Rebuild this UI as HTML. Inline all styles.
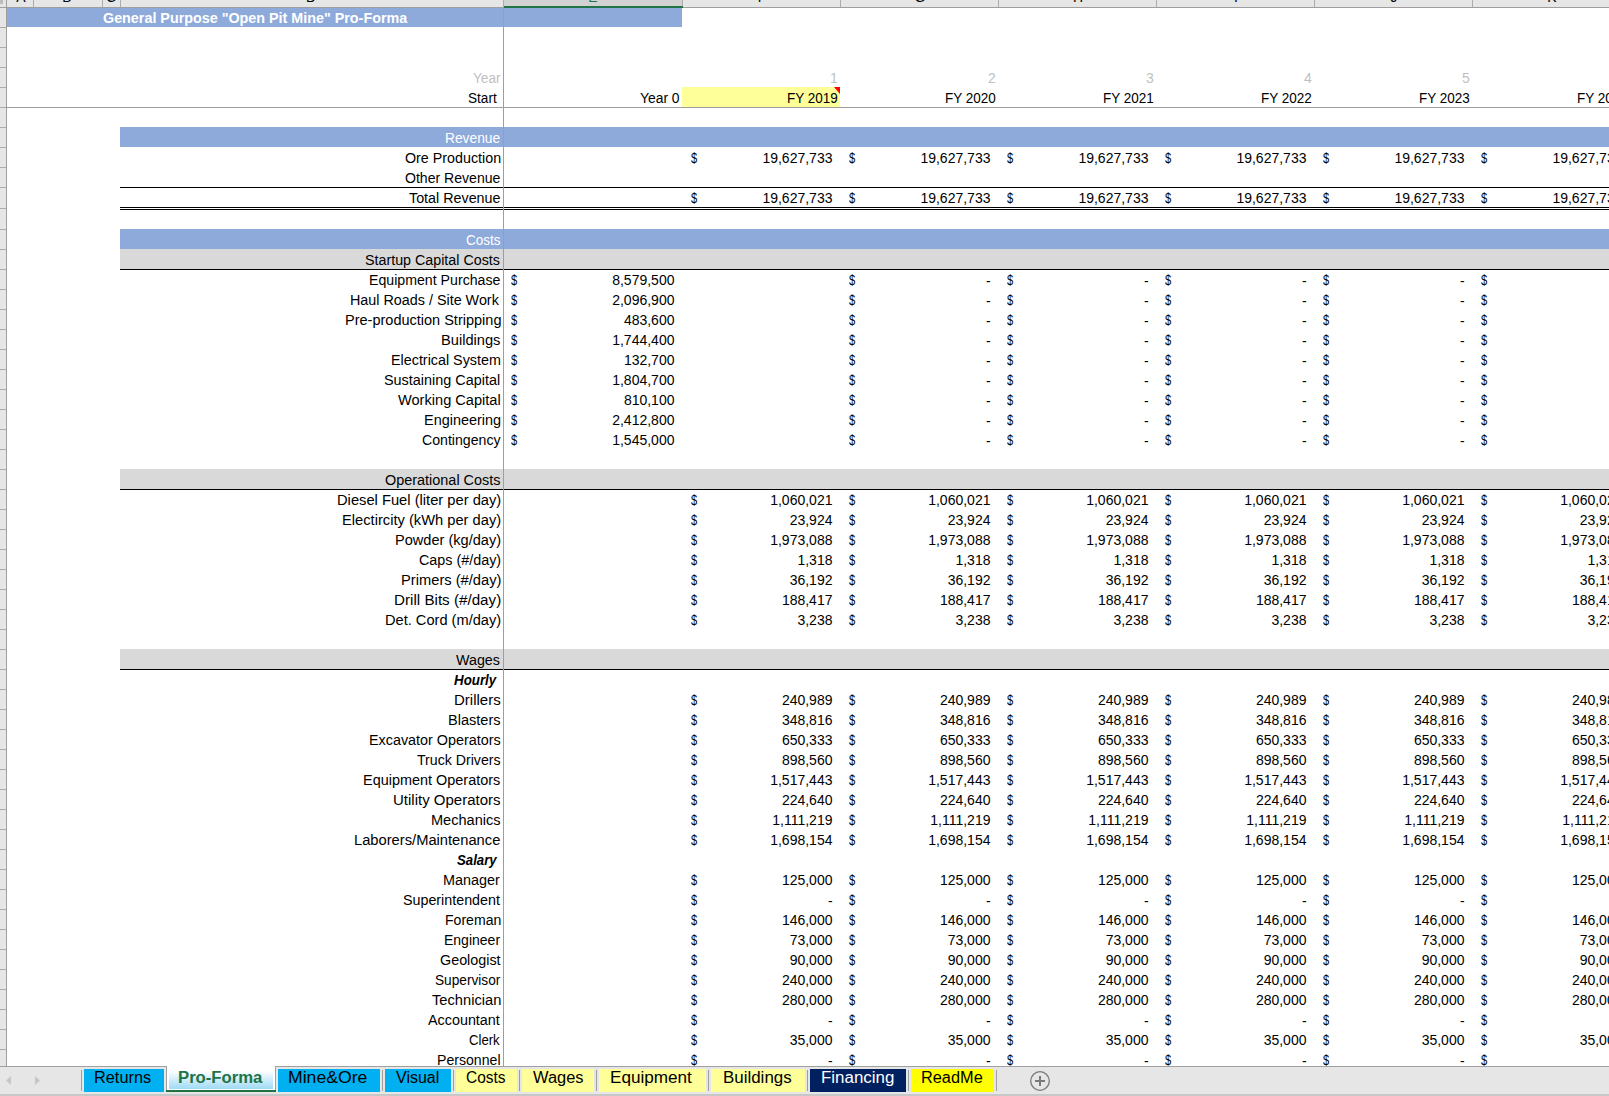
<!DOCTYPE html>
<html><head><meta charset="utf-8"><style>
html,body{margin:0;padding:0;}
body{width:1609px;height:1096px;overflow:hidden;position:relative;background:#fff;font-family:"Liberation Sans",sans-serif;}
.r{position:absolute;}
.t{position:absolute;line-height:0;height:20px;white-space:nowrap;transform-origin:0 0;}
.t::before{content:"";display:inline-block;height:20px;vertical-align:baseline;}
.hl{position:absolute;top:-11px;width:40px;text-align:center;font-size:14px;line-height:16px;height:16px;overflow:hidden;}
</style></head><body>
<div class="r" style="left:7px;top:8px;width:675px;height:19px;background:#8eaadb;"></div>
<div class="r" style="left:120px;top:127px;width:1489px;height:20px;background:#8eaadb;"></div>
<div class="r" style="left:120px;top:229px;width:1489px;height:20px;background:#8eaadb;"></div>
<div class="r" style="left:120px;top:249px;width:1489px;height:20px;background:#d9d9d9;"></div>
<div class="r" style="left:120px;top:269px;width:1489px;height:1px;background:#000;"></div>
<div class="r" style="left:120px;top:469px;width:1489px;height:20px;background:#d9d9d9;"></div>
<div class="r" style="left:120px;top:489px;width:1489px;height:1px;background:#000;"></div>
<div class="r" style="left:120px;top:649px;width:1489px;height:20px;background:#d9d9d9;"></div>
<div class="r" style="left:120px;top:669px;width:1489px;height:1px;background:#000;"></div>
<div class="r" style="left:120px;top:187px;width:1489px;height:1px;background:#000;"></div>
<div class="r" style="left:120px;top:207px;width:1489px;height:1px;background:#000;"></div>
<div class="r" style="left:120px;top:209px;width:1489px;height:1px;background:#000;"></div>
<div class="r" style="left:682px;top:87px;width:158px;height:20px;background:#ffff99;"></div>
<div class="r" style="left:834px;top:87px;width:0;height:0;border-top:7px solid #ff0000;border-left:6px solid transparent;"></div>
<div class="t" style="left:102.70px;top:3.00px;font-size:14px;color:#fff;font-weight:bold;transform:scaleX(1.0234);">General Purpose &quot;Open Pit Mine&quot; Pro-Forma</div>
<div class="t" style="left:472.50px;top:63.00px;font-size:14px;color:#bfbfbf;transform:scaleX(0.9712);">Year</div>
<div class="t" style="left:467.50px;top:83.00px;font-size:14px;color:#000;transform:scaleX(0.9705);">Start</div>
<div class="t" style="left:639.50px;top:83.00px;font-size:14px;color:#000;transform:scaleX(0.9906);">Year 0</div>
<div class="t" style="left:830.00px;top:63.00px;font-size:14px;color:#bfbfbf;">1</div>
<div class="t" style="left:786.74px;top:83.00px;font-size:14px;color:#000;transform:scaleX(0.9648);">FY 2019</div>
<div class="t" style="left:988.00px;top:63.00px;font-size:14px;color:#bfbfbf;">2</div>
<div class="t" style="left:944.74px;top:83.00px;font-size:14px;color:#000;transform:scaleX(0.9648);">FY 2020</div>
<div class="t" style="left:1146.00px;top:63.00px;font-size:14px;color:#bfbfbf;">3</div>
<div class="t" style="left:1102.74px;top:83.00px;font-size:14px;color:#000;transform:scaleX(0.9648);">FY 2021</div>
<div class="t" style="left:1304.00px;top:63.00px;font-size:14px;color:#bfbfbf;">4</div>
<div class="t" style="left:1260.74px;top:83.00px;font-size:14px;color:#000;transform:scaleX(0.9648);">FY 2022</div>
<div class="t" style="left:1462.00px;top:63.00px;font-size:14px;color:#bfbfbf;">5</div>
<div class="t" style="left:1418.74px;top:83.00px;font-size:14px;color:#000;transform:scaleX(0.9648);">FY 2023</div>
<div class="t" style="left:1620.00px;top:63.00px;font-size:14px;color:#bfbfbf;">6</div>
<div class="t" style="left:1576.74px;top:83.00px;font-size:14px;color:#000;transform:scaleX(0.9648);">FY 2024</div>
<div class="t" style="left:444.92px;top:123.00px;font-size:14px;color:#fff;transform:scaleX(0.9845);">Revenue</div>
<div class="t" style="left:405.00px;top:143.00px;font-size:14px;color:#000;transform:scaleX(1.0206);">Ore Production</div>
<div class="t" style="left:404.70px;top:163.00px;font-size:14px;color:#000;transform:scaleX(1.0046);">Other Revenue</div>
<div class="t" style="left:408.60px;top:183.00px;font-size:14px;color:#000;transform:scaleX(1.0221);">Total Revenue</div>
<div class="t" style="left:465.80px;top:225.00px;font-size:14px;color:#fff;transform:scaleX(0.9641);">Costs</div>
<div class="t" style="left:365.40px;top:245.00px;font-size:14px;color:#000;transform:scaleX(1.0198);">Startup Capital Costs</div>
<div class="t" style="left:368.69px;top:265.00px;font-size:14px;color:#000;transform:scaleX(1.0110);">Equipment Purchase</div>
<div class="t" style="left:350.48px;top:285.00px;font-size:14px;color:#000;transform:scaleX(1.0245);">Haul Roads / Site Work</div>
<div class="t" style="left:344.66px;top:305.00px;font-size:14px;color:#000;transform:scaleX(1.0363);">Pre-production Stripping</div>
<div class="t" style="left:440.85px;top:325.00px;font-size:14px;color:#000;transform:scaleX(1.0463);">Buildings</div>
<div class="t" style="left:391.08px;top:345.00px;font-size:14px;color:#000;transform:scaleX(1.0237);">Electrical System</div>
<div class="t" style="left:384.30px;top:365.00px;font-size:14px;color:#000;transform:scaleX(1.0289);">Sustaining Capital</div>
<div class="t" style="left:397.70px;top:385.00px;font-size:14px;color:#000;transform:scaleX(1.0422);">Working Capital</div>
<div class="t" style="left:424.07px;top:405.00px;font-size:14px;color:#000;transform:scaleX(1.0310);">Engineering</div>
<div class="t" style="left:421.70px;top:425.00px;font-size:14px;color:#000;transform:scaleX(1.0099);">Contingency</div>
<div class="t" style="left:384.80px;top:465.00px;font-size:14px;color:#000;transform:scaleX(1.0307);">Operational Costs</div>
<div class="t" style="left:336.75px;top:485.00px;font-size:14px;color:#000;transform:scaleX(1.0503);">Diesel Fuel (liter per day)</div>
<div class="t" style="left:341.85px;top:505.00px;font-size:14px;color:#000;transform:scaleX(1.0491);">Electircity (kWh per day)</div>
<div class="t" style="left:394.96px;top:525.00px;font-size:14px;color:#000;transform:scaleX(1.0402);">Powder (kg/day)</div>
<div class="t" style="left:418.90px;top:545.00px;font-size:14px;color:#000;transform:scaleX(1.0241);">Caps (#/day)</div>
<div class="t" style="left:400.55px;top:565.00px;font-size:14px;color:#000;transform:scaleX(1.0498);">Primers (#/day)</div>
<div class="t" style="left:393.81px;top:585.00px;font-size:14px;color:#000;transform:scaleX(1.0851);">Drill Bits (#/day)</div>
<div class="t" style="left:384.86px;top:605.00px;font-size:14px;color:#000;transform:scaleX(1.0439);">Det. Cord (m/day)</div>
<div class="t" style="left:456.40px;top:645.00px;font-size:14px;color:#000;transform:scaleX(1.0197);">Wages</div>
<div class="t" style="left:453.63px;top:685.00px;font-size:14px;color:#000;transform:scaleX(1.0716);">Drillers</div>
<div class="t" style="left:447.76px;top:705.00px;font-size:14px;color:#000;transform:scaleX(1.0389);">Blasters</div>
<div class="t" style="left:368.67px;top:725.00px;font-size:14px;color:#000;transform:scaleX(1.0252);">Excavator Operators</div>
<div class="t" style="left:416.70px;top:745.00px;font-size:14px;color:#000;transform:scaleX(1.0109);">Truck Drivers</div>
<div class="t" style="left:363.07px;top:765.00px;font-size:14px;color:#000;transform:scaleX(1.0313);">Equipment Operators</div>
<div class="t" style="left:392.73px;top:785.00px;font-size:14px;color:#000;transform:scaleX(1.0719);">Utility Operators</div>
<div class="t" style="left:430.76px;top:805.00px;font-size:14px;color:#000;transform:scaleX(1.0392);">Mechanics</div>
<div class="t" style="left:353.75px;top:825.00px;font-size:14px;color:#000;transform:scaleX(1.0504);">Laborers/Maintenance</div>
<div class="t" style="left:443.07px;top:865.00px;font-size:14px;color:#000;transform:scaleX(1.0294);">Manager</div>
<div class="t" style="left:403.30px;top:885.00px;font-size:14px;color:#000;transform:scaleX(1.0202);">Superintendent</div>
<div class="t" style="left:444.80px;top:905.00px;font-size:14px;color:#000;transform:scaleX(1.0049);">Foreman</div>
<div class="t" style="left:444.00px;top:925.00px;font-size:14px;color:#000;">Engineer</div>
<div class="t" style="left:439.60px;top:945.00px;font-size:14px;color:#000;transform:scaleX(1.0244);">Geologist</div>
<div class="t" style="left:434.60px;top:965.00px;font-size:14px;color:#000;transform:scaleX(0.9769);">Supervisor</div>
<div class="t" style="left:431.80px;top:985.00px;font-size:14px;color:#000;transform:scaleX(1.0480);">Technician</div>
<div class="t" style="left:428.40px;top:1005.00px;font-size:14px;color:#000;transform:scaleX(1.0248);">Accountant</div>
<div class="t" style="left:468.70px;top:1025.00px;font-size:14px;color:#000;transform:scaleX(0.9386);">Clerk</div>
<div class="t" style="left:436.89px;top:1045.00px;font-size:14px;color:#000;transform:scaleX(1.0076);">Personnel</div>
<div class="t" style="left:454.30px;top:665.00px;font-size:14px;color:#000;font-weight:bold;font-style:italic;transform:scaleX(0.9528);">Hourly</div>
<div class="t" style="left:457.00px;top:845.00px;font-size:14px;color:#000;font-weight:bold;font-style:italic;transform:scaleX(0.9434);">Salary</div>
<div class="t" style="left:690.80px;top:143.00px;font-size:14px;color:#000;transform:scale(0.8000,1.08);transform-origin:0 17px;">$</div>
<div class="t" style="left:762.42px;top:143.00px;font-size:14px;color:#000;">19,627,733</div>
<div class="t" style="left:690.80px;top:183.00px;font-size:14px;color:#000;transform:scale(0.8000,1.08);transform-origin:0 17px;">$</div>
<div class="t" style="left:762.42px;top:183.00px;font-size:14px;color:#000;">19,627,733</div>
<div class="t" style="left:848.80px;top:143.00px;font-size:14px;color:#000;transform:scale(0.8000,1.08);transform-origin:0 17px;">$</div>
<div class="t" style="left:920.42px;top:143.00px;font-size:14px;color:#000;">19,627,733</div>
<div class="t" style="left:848.80px;top:183.00px;font-size:14px;color:#000;transform:scale(0.8000,1.08);transform-origin:0 17px;">$</div>
<div class="t" style="left:920.42px;top:183.00px;font-size:14px;color:#000;">19,627,733</div>
<div class="t" style="left:1006.80px;top:143.00px;font-size:14px;color:#000;transform:scale(0.8000,1.08);transform-origin:0 17px;">$</div>
<div class="t" style="left:1078.42px;top:143.00px;font-size:14px;color:#000;">19,627,733</div>
<div class="t" style="left:1006.80px;top:183.00px;font-size:14px;color:#000;transform:scale(0.8000,1.08);transform-origin:0 17px;">$</div>
<div class="t" style="left:1078.42px;top:183.00px;font-size:14px;color:#000;">19,627,733</div>
<div class="t" style="left:1164.80px;top:143.00px;font-size:14px;color:#000;transform:scale(0.8000,1.08);transform-origin:0 17px;">$</div>
<div class="t" style="left:1236.42px;top:143.00px;font-size:14px;color:#000;">19,627,733</div>
<div class="t" style="left:1164.80px;top:183.00px;font-size:14px;color:#000;transform:scale(0.8000,1.08);transform-origin:0 17px;">$</div>
<div class="t" style="left:1236.42px;top:183.00px;font-size:14px;color:#000;">19,627,733</div>
<div class="t" style="left:1322.80px;top:143.00px;font-size:14px;color:#000;transform:scale(0.8000,1.08);transform-origin:0 17px;">$</div>
<div class="t" style="left:1394.42px;top:143.00px;font-size:14px;color:#000;">19,627,733</div>
<div class="t" style="left:1322.80px;top:183.00px;font-size:14px;color:#000;transform:scale(0.8000,1.08);transform-origin:0 17px;">$</div>
<div class="t" style="left:1394.42px;top:183.00px;font-size:14px;color:#000;">19,627,733</div>
<div class="t" style="left:1480.80px;top:143.00px;font-size:14px;color:#000;transform:scale(0.8000,1.08);transform-origin:0 17px;">$</div>
<div class="t" style="left:1552.42px;top:143.00px;font-size:14px;color:#000;">19,627,733</div>
<div class="t" style="left:1480.80px;top:183.00px;font-size:14px;color:#000;transform:scale(0.8000,1.08);transform-origin:0 17px;">$</div>
<div class="t" style="left:1552.42px;top:183.00px;font-size:14px;color:#000;">19,627,733</div>
<div class="t" style="left:510.80px;top:265.00px;font-size:14px;color:#000;transform:scale(0.8000,1.08);transform-origin:0 17px;">$</div>
<div class="t" style="left:612.20px;top:265.00px;font-size:14px;color:#000;">8,579,500</div>
<div class="t" style="left:848.80px;top:265.00px;font-size:14px;color:#000;transform:scale(0.8000,1.08);transform-origin:0 17px;">$</div>
<div class="t" style="left:985.90px;top:266.00px;font-size:14px;color:#000;">-</div>
<div class="t" style="left:1006.80px;top:265.00px;font-size:14px;color:#000;transform:scale(0.8000,1.08);transform-origin:0 17px;">$</div>
<div class="t" style="left:1143.90px;top:266.00px;font-size:14px;color:#000;">-</div>
<div class="t" style="left:1164.80px;top:265.00px;font-size:14px;color:#000;transform:scale(0.8000,1.08);transform-origin:0 17px;">$</div>
<div class="t" style="left:1301.90px;top:266.00px;font-size:14px;color:#000;">-</div>
<div class="t" style="left:1322.80px;top:265.00px;font-size:14px;color:#000;transform:scale(0.8000,1.08);transform-origin:0 17px;">$</div>
<div class="t" style="left:1459.90px;top:266.00px;font-size:14px;color:#000;">-</div>
<div class="t" style="left:1480.80px;top:265.00px;font-size:14px;color:#000;transform:scale(0.8000,1.08);transform-origin:0 17px;">$</div>
<div class="t" style="left:1617.90px;top:266.00px;font-size:14px;color:#000;">-</div>
<div class="t" style="left:510.80px;top:285.00px;font-size:14px;color:#000;transform:scale(0.8000,1.08);transform-origin:0 17px;">$</div>
<div class="t" style="left:612.20px;top:285.00px;font-size:14px;color:#000;">2,096,900</div>
<div class="t" style="left:848.80px;top:285.00px;font-size:14px;color:#000;transform:scale(0.8000,1.08);transform-origin:0 17px;">$</div>
<div class="t" style="left:985.90px;top:286.00px;font-size:14px;color:#000;">-</div>
<div class="t" style="left:1006.80px;top:285.00px;font-size:14px;color:#000;transform:scale(0.8000,1.08);transform-origin:0 17px;">$</div>
<div class="t" style="left:1143.90px;top:286.00px;font-size:14px;color:#000;">-</div>
<div class="t" style="left:1164.80px;top:285.00px;font-size:14px;color:#000;transform:scale(0.8000,1.08);transform-origin:0 17px;">$</div>
<div class="t" style="left:1301.90px;top:286.00px;font-size:14px;color:#000;">-</div>
<div class="t" style="left:1322.80px;top:285.00px;font-size:14px;color:#000;transform:scale(0.8000,1.08);transform-origin:0 17px;">$</div>
<div class="t" style="left:1459.90px;top:286.00px;font-size:14px;color:#000;">-</div>
<div class="t" style="left:1480.80px;top:285.00px;font-size:14px;color:#000;transform:scale(0.8000,1.08);transform-origin:0 17px;">$</div>
<div class="t" style="left:1617.90px;top:286.00px;font-size:14px;color:#000;">-</div>
<div class="t" style="left:510.80px;top:305.00px;font-size:14px;color:#000;transform:scale(0.8000,1.08);transform-origin:0 17px;">$</div>
<div class="t" style="left:623.88px;top:305.00px;font-size:14px;color:#000;">483,600</div>
<div class="t" style="left:848.80px;top:305.00px;font-size:14px;color:#000;transform:scale(0.8000,1.08);transform-origin:0 17px;">$</div>
<div class="t" style="left:985.90px;top:306.00px;font-size:14px;color:#000;">-</div>
<div class="t" style="left:1006.80px;top:305.00px;font-size:14px;color:#000;transform:scale(0.8000,1.08);transform-origin:0 17px;">$</div>
<div class="t" style="left:1143.90px;top:306.00px;font-size:14px;color:#000;">-</div>
<div class="t" style="left:1164.80px;top:305.00px;font-size:14px;color:#000;transform:scale(0.8000,1.08);transform-origin:0 17px;">$</div>
<div class="t" style="left:1301.90px;top:306.00px;font-size:14px;color:#000;">-</div>
<div class="t" style="left:1322.80px;top:305.00px;font-size:14px;color:#000;transform:scale(0.8000,1.08);transform-origin:0 17px;">$</div>
<div class="t" style="left:1459.90px;top:306.00px;font-size:14px;color:#000;">-</div>
<div class="t" style="left:1480.80px;top:305.00px;font-size:14px;color:#000;transform:scale(0.8000,1.08);transform-origin:0 17px;">$</div>
<div class="t" style="left:1617.90px;top:306.00px;font-size:14px;color:#000;">-</div>
<div class="t" style="left:510.80px;top:325.00px;font-size:14px;color:#000;transform:scale(0.8000,1.08);transform-origin:0 17px;">$</div>
<div class="t" style="left:612.20px;top:325.00px;font-size:14px;color:#000;">1,744,400</div>
<div class="t" style="left:848.80px;top:325.00px;font-size:14px;color:#000;transform:scale(0.8000,1.08);transform-origin:0 17px;">$</div>
<div class="t" style="left:985.90px;top:326.00px;font-size:14px;color:#000;">-</div>
<div class="t" style="left:1006.80px;top:325.00px;font-size:14px;color:#000;transform:scale(0.8000,1.08);transform-origin:0 17px;">$</div>
<div class="t" style="left:1143.90px;top:326.00px;font-size:14px;color:#000;">-</div>
<div class="t" style="left:1164.80px;top:325.00px;font-size:14px;color:#000;transform:scale(0.8000,1.08);transform-origin:0 17px;">$</div>
<div class="t" style="left:1301.90px;top:326.00px;font-size:14px;color:#000;">-</div>
<div class="t" style="left:1322.80px;top:325.00px;font-size:14px;color:#000;transform:scale(0.8000,1.08);transform-origin:0 17px;">$</div>
<div class="t" style="left:1459.90px;top:326.00px;font-size:14px;color:#000;">-</div>
<div class="t" style="left:1480.80px;top:325.00px;font-size:14px;color:#000;transform:scale(0.8000,1.08);transform-origin:0 17px;">$</div>
<div class="t" style="left:1617.90px;top:326.00px;font-size:14px;color:#000;">-</div>
<div class="t" style="left:510.80px;top:345.00px;font-size:14px;color:#000;transform:scale(0.8000,1.08);transform-origin:0 17px;">$</div>
<div class="t" style="left:623.88px;top:345.00px;font-size:14px;color:#000;">132,700</div>
<div class="t" style="left:848.80px;top:345.00px;font-size:14px;color:#000;transform:scale(0.8000,1.08);transform-origin:0 17px;">$</div>
<div class="t" style="left:985.90px;top:346.00px;font-size:14px;color:#000;">-</div>
<div class="t" style="left:1006.80px;top:345.00px;font-size:14px;color:#000;transform:scale(0.8000,1.08);transform-origin:0 17px;">$</div>
<div class="t" style="left:1143.90px;top:346.00px;font-size:14px;color:#000;">-</div>
<div class="t" style="left:1164.80px;top:345.00px;font-size:14px;color:#000;transform:scale(0.8000,1.08);transform-origin:0 17px;">$</div>
<div class="t" style="left:1301.90px;top:346.00px;font-size:14px;color:#000;">-</div>
<div class="t" style="left:1322.80px;top:345.00px;font-size:14px;color:#000;transform:scale(0.8000,1.08);transform-origin:0 17px;">$</div>
<div class="t" style="left:1459.90px;top:346.00px;font-size:14px;color:#000;">-</div>
<div class="t" style="left:1480.80px;top:345.00px;font-size:14px;color:#000;transform:scale(0.8000,1.08);transform-origin:0 17px;">$</div>
<div class="t" style="left:1617.90px;top:346.00px;font-size:14px;color:#000;">-</div>
<div class="t" style="left:510.80px;top:365.00px;font-size:14px;color:#000;transform:scale(0.8000,1.08);transform-origin:0 17px;">$</div>
<div class="t" style="left:612.20px;top:365.00px;font-size:14px;color:#000;">1,804,700</div>
<div class="t" style="left:848.80px;top:365.00px;font-size:14px;color:#000;transform:scale(0.8000,1.08);transform-origin:0 17px;">$</div>
<div class="t" style="left:985.90px;top:366.00px;font-size:14px;color:#000;">-</div>
<div class="t" style="left:1006.80px;top:365.00px;font-size:14px;color:#000;transform:scale(0.8000,1.08);transform-origin:0 17px;">$</div>
<div class="t" style="left:1143.90px;top:366.00px;font-size:14px;color:#000;">-</div>
<div class="t" style="left:1164.80px;top:365.00px;font-size:14px;color:#000;transform:scale(0.8000,1.08);transform-origin:0 17px;">$</div>
<div class="t" style="left:1301.90px;top:366.00px;font-size:14px;color:#000;">-</div>
<div class="t" style="left:1322.80px;top:365.00px;font-size:14px;color:#000;transform:scale(0.8000,1.08);transform-origin:0 17px;">$</div>
<div class="t" style="left:1459.90px;top:366.00px;font-size:14px;color:#000;">-</div>
<div class="t" style="left:1480.80px;top:365.00px;font-size:14px;color:#000;transform:scale(0.8000,1.08);transform-origin:0 17px;">$</div>
<div class="t" style="left:1617.90px;top:366.00px;font-size:14px;color:#000;">-</div>
<div class="t" style="left:510.80px;top:385.00px;font-size:14px;color:#000;transform:scale(0.8000,1.08);transform-origin:0 17px;">$</div>
<div class="t" style="left:623.88px;top:385.00px;font-size:14px;color:#000;">810,100</div>
<div class="t" style="left:848.80px;top:385.00px;font-size:14px;color:#000;transform:scale(0.8000,1.08);transform-origin:0 17px;">$</div>
<div class="t" style="left:985.90px;top:386.00px;font-size:14px;color:#000;">-</div>
<div class="t" style="left:1006.80px;top:385.00px;font-size:14px;color:#000;transform:scale(0.8000,1.08);transform-origin:0 17px;">$</div>
<div class="t" style="left:1143.90px;top:386.00px;font-size:14px;color:#000;">-</div>
<div class="t" style="left:1164.80px;top:385.00px;font-size:14px;color:#000;transform:scale(0.8000,1.08);transform-origin:0 17px;">$</div>
<div class="t" style="left:1301.90px;top:386.00px;font-size:14px;color:#000;">-</div>
<div class="t" style="left:1322.80px;top:385.00px;font-size:14px;color:#000;transform:scale(0.8000,1.08);transform-origin:0 17px;">$</div>
<div class="t" style="left:1459.90px;top:386.00px;font-size:14px;color:#000;">-</div>
<div class="t" style="left:1480.80px;top:385.00px;font-size:14px;color:#000;transform:scale(0.8000,1.08);transform-origin:0 17px;">$</div>
<div class="t" style="left:1617.90px;top:386.00px;font-size:14px;color:#000;">-</div>
<div class="t" style="left:510.80px;top:405.00px;font-size:14px;color:#000;transform:scale(0.8000,1.08);transform-origin:0 17px;">$</div>
<div class="t" style="left:612.20px;top:405.00px;font-size:14px;color:#000;">2,412,800</div>
<div class="t" style="left:848.80px;top:405.00px;font-size:14px;color:#000;transform:scale(0.8000,1.08);transform-origin:0 17px;">$</div>
<div class="t" style="left:985.90px;top:406.00px;font-size:14px;color:#000;">-</div>
<div class="t" style="left:1006.80px;top:405.00px;font-size:14px;color:#000;transform:scale(0.8000,1.08);transform-origin:0 17px;">$</div>
<div class="t" style="left:1143.90px;top:406.00px;font-size:14px;color:#000;">-</div>
<div class="t" style="left:1164.80px;top:405.00px;font-size:14px;color:#000;transform:scale(0.8000,1.08);transform-origin:0 17px;">$</div>
<div class="t" style="left:1301.90px;top:406.00px;font-size:14px;color:#000;">-</div>
<div class="t" style="left:1322.80px;top:405.00px;font-size:14px;color:#000;transform:scale(0.8000,1.08);transform-origin:0 17px;">$</div>
<div class="t" style="left:1459.90px;top:406.00px;font-size:14px;color:#000;">-</div>
<div class="t" style="left:1480.80px;top:405.00px;font-size:14px;color:#000;transform:scale(0.8000,1.08);transform-origin:0 17px;">$</div>
<div class="t" style="left:1617.90px;top:406.00px;font-size:14px;color:#000;">-</div>
<div class="t" style="left:510.80px;top:425.00px;font-size:14px;color:#000;transform:scale(0.8000,1.08);transform-origin:0 17px;">$</div>
<div class="t" style="left:612.20px;top:425.00px;font-size:14px;color:#000;">1,545,000</div>
<div class="t" style="left:848.80px;top:425.00px;font-size:14px;color:#000;transform:scale(0.8000,1.08);transform-origin:0 17px;">$</div>
<div class="t" style="left:985.90px;top:426.00px;font-size:14px;color:#000;">-</div>
<div class="t" style="left:1006.80px;top:425.00px;font-size:14px;color:#000;transform:scale(0.8000,1.08);transform-origin:0 17px;">$</div>
<div class="t" style="left:1143.90px;top:426.00px;font-size:14px;color:#000;">-</div>
<div class="t" style="left:1164.80px;top:425.00px;font-size:14px;color:#000;transform:scale(0.8000,1.08);transform-origin:0 17px;">$</div>
<div class="t" style="left:1301.90px;top:426.00px;font-size:14px;color:#000;">-</div>
<div class="t" style="left:1322.80px;top:425.00px;font-size:14px;color:#000;transform:scale(0.8000,1.08);transform-origin:0 17px;">$</div>
<div class="t" style="left:1459.90px;top:426.00px;font-size:14px;color:#000;">-</div>
<div class="t" style="left:1480.80px;top:425.00px;font-size:14px;color:#000;transform:scale(0.8000,1.08);transform-origin:0 17px;">$</div>
<div class="t" style="left:1617.90px;top:426.00px;font-size:14px;color:#000;">-</div>
<div class="t" style="left:690.80px;top:485.00px;font-size:14px;color:#000;transform:scale(0.8000,1.08);transform-origin:0 17px;">$</div>
<div class="t" style="left:770.20px;top:485.00px;font-size:14px;color:#000;">1,060,021</div>
<div class="t" style="left:848.80px;top:485.00px;font-size:14px;color:#000;transform:scale(0.8000,1.08);transform-origin:0 17px;">$</div>
<div class="t" style="left:928.20px;top:485.00px;font-size:14px;color:#000;">1,060,021</div>
<div class="t" style="left:1006.80px;top:485.00px;font-size:14px;color:#000;transform:scale(0.8000,1.08);transform-origin:0 17px;">$</div>
<div class="t" style="left:1086.20px;top:485.00px;font-size:14px;color:#000;">1,060,021</div>
<div class="t" style="left:1164.80px;top:485.00px;font-size:14px;color:#000;transform:scale(0.8000,1.08);transform-origin:0 17px;">$</div>
<div class="t" style="left:1244.20px;top:485.00px;font-size:14px;color:#000;">1,060,021</div>
<div class="t" style="left:1322.80px;top:485.00px;font-size:14px;color:#000;transform:scale(0.8000,1.08);transform-origin:0 17px;">$</div>
<div class="t" style="left:1402.20px;top:485.00px;font-size:14px;color:#000;">1,060,021</div>
<div class="t" style="left:1480.80px;top:485.00px;font-size:14px;color:#000;transform:scale(0.8000,1.08);transform-origin:0 17px;">$</div>
<div class="t" style="left:1560.20px;top:485.00px;font-size:14px;color:#000;">1,060,021</div>
<div class="t" style="left:690.80px;top:505.00px;font-size:14px;color:#000;transform:scale(0.8000,1.08);transform-origin:0 17px;">$</div>
<div class="t" style="left:789.67px;top:505.00px;font-size:14px;color:#000;">23,924</div>
<div class="t" style="left:848.80px;top:505.00px;font-size:14px;color:#000;transform:scale(0.8000,1.08);transform-origin:0 17px;">$</div>
<div class="t" style="left:947.67px;top:505.00px;font-size:14px;color:#000;">23,924</div>
<div class="t" style="left:1006.80px;top:505.00px;font-size:14px;color:#000;transform:scale(0.8000,1.08);transform-origin:0 17px;">$</div>
<div class="t" style="left:1105.67px;top:505.00px;font-size:14px;color:#000;">23,924</div>
<div class="t" style="left:1164.80px;top:505.00px;font-size:14px;color:#000;transform:scale(0.8000,1.08);transform-origin:0 17px;">$</div>
<div class="t" style="left:1263.67px;top:505.00px;font-size:14px;color:#000;">23,924</div>
<div class="t" style="left:1322.80px;top:505.00px;font-size:14px;color:#000;transform:scale(0.8000,1.08);transform-origin:0 17px;">$</div>
<div class="t" style="left:1421.67px;top:505.00px;font-size:14px;color:#000;">23,924</div>
<div class="t" style="left:1480.80px;top:505.00px;font-size:14px;color:#000;transform:scale(0.8000,1.08);transform-origin:0 17px;">$</div>
<div class="t" style="left:1579.67px;top:505.00px;font-size:14px;color:#000;">23,924</div>
<div class="t" style="left:690.80px;top:525.00px;font-size:14px;color:#000;transform:scale(0.8000,1.08);transform-origin:0 17px;">$</div>
<div class="t" style="left:770.20px;top:525.00px;font-size:14px;color:#000;">1,973,088</div>
<div class="t" style="left:848.80px;top:525.00px;font-size:14px;color:#000;transform:scale(0.8000,1.08);transform-origin:0 17px;">$</div>
<div class="t" style="left:928.20px;top:525.00px;font-size:14px;color:#000;">1,973,088</div>
<div class="t" style="left:1006.80px;top:525.00px;font-size:14px;color:#000;transform:scale(0.8000,1.08);transform-origin:0 17px;">$</div>
<div class="t" style="left:1086.20px;top:525.00px;font-size:14px;color:#000;">1,973,088</div>
<div class="t" style="left:1164.80px;top:525.00px;font-size:14px;color:#000;transform:scale(0.8000,1.08);transform-origin:0 17px;">$</div>
<div class="t" style="left:1244.20px;top:525.00px;font-size:14px;color:#000;">1,973,088</div>
<div class="t" style="left:1322.80px;top:525.00px;font-size:14px;color:#000;transform:scale(0.8000,1.08);transform-origin:0 17px;">$</div>
<div class="t" style="left:1402.20px;top:525.00px;font-size:14px;color:#000;">1,973,088</div>
<div class="t" style="left:1480.80px;top:525.00px;font-size:14px;color:#000;transform:scale(0.8000,1.08);transform-origin:0 17px;">$</div>
<div class="t" style="left:1560.20px;top:525.00px;font-size:14px;color:#000;">1,973,088</div>
<div class="t" style="left:690.80px;top:545.00px;font-size:14px;color:#000;transform:scale(0.8000,1.08);transform-origin:0 17px;">$</div>
<div class="t" style="left:797.45px;top:545.00px;font-size:14px;color:#000;">1,318</div>
<div class="t" style="left:848.80px;top:545.00px;font-size:14px;color:#000;transform:scale(0.8000,1.08);transform-origin:0 17px;">$</div>
<div class="t" style="left:955.45px;top:545.00px;font-size:14px;color:#000;">1,318</div>
<div class="t" style="left:1006.80px;top:545.00px;font-size:14px;color:#000;transform:scale(0.8000,1.08);transform-origin:0 17px;">$</div>
<div class="t" style="left:1113.45px;top:545.00px;font-size:14px;color:#000;">1,318</div>
<div class="t" style="left:1164.80px;top:545.00px;font-size:14px;color:#000;transform:scale(0.8000,1.08);transform-origin:0 17px;">$</div>
<div class="t" style="left:1271.45px;top:545.00px;font-size:14px;color:#000;">1,318</div>
<div class="t" style="left:1322.80px;top:545.00px;font-size:14px;color:#000;transform:scale(0.8000,1.08);transform-origin:0 17px;">$</div>
<div class="t" style="left:1429.45px;top:545.00px;font-size:14px;color:#000;">1,318</div>
<div class="t" style="left:1480.80px;top:545.00px;font-size:14px;color:#000;transform:scale(0.8000,1.08);transform-origin:0 17px;">$</div>
<div class="t" style="left:1587.45px;top:545.00px;font-size:14px;color:#000;">1,318</div>
<div class="t" style="left:690.80px;top:565.00px;font-size:14px;color:#000;transform:scale(0.8000,1.08);transform-origin:0 17px;">$</div>
<div class="t" style="left:789.67px;top:565.00px;font-size:14px;color:#000;">36,192</div>
<div class="t" style="left:848.80px;top:565.00px;font-size:14px;color:#000;transform:scale(0.8000,1.08);transform-origin:0 17px;">$</div>
<div class="t" style="left:947.67px;top:565.00px;font-size:14px;color:#000;">36,192</div>
<div class="t" style="left:1006.80px;top:565.00px;font-size:14px;color:#000;transform:scale(0.8000,1.08);transform-origin:0 17px;">$</div>
<div class="t" style="left:1105.67px;top:565.00px;font-size:14px;color:#000;">36,192</div>
<div class="t" style="left:1164.80px;top:565.00px;font-size:14px;color:#000;transform:scale(0.8000,1.08);transform-origin:0 17px;">$</div>
<div class="t" style="left:1263.67px;top:565.00px;font-size:14px;color:#000;">36,192</div>
<div class="t" style="left:1322.80px;top:565.00px;font-size:14px;color:#000;transform:scale(0.8000,1.08);transform-origin:0 17px;">$</div>
<div class="t" style="left:1421.67px;top:565.00px;font-size:14px;color:#000;">36,192</div>
<div class="t" style="left:1480.80px;top:565.00px;font-size:14px;color:#000;transform:scale(0.8000,1.08);transform-origin:0 17px;">$</div>
<div class="t" style="left:1579.67px;top:565.00px;font-size:14px;color:#000;">36,192</div>
<div class="t" style="left:690.80px;top:585.00px;font-size:14px;color:#000;transform:scale(0.8000,1.08);transform-origin:0 17px;">$</div>
<div class="t" style="left:781.88px;top:585.00px;font-size:14px;color:#000;">188,417</div>
<div class="t" style="left:848.80px;top:585.00px;font-size:14px;color:#000;transform:scale(0.8000,1.08);transform-origin:0 17px;">$</div>
<div class="t" style="left:939.88px;top:585.00px;font-size:14px;color:#000;">188,417</div>
<div class="t" style="left:1006.80px;top:585.00px;font-size:14px;color:#000;transform:scale(0.8000,1.08);transform-origin:0 17px;">$</div>
<div class="t" style="left:1097.88px;top:585.00px;font-size:14px;color:#000;">188,417</div>
<div class="t" style="left:1164.80px;top:585.00px;font-size:14px;color:#000;transform:scale(0.8000,1.08);transform-origin:0 17px;">$</div>
<div class="t" style="left:1255.88px;top:585.00px;font-size:14px;color:#000;">188,417</div>
<div class="t" style="left:1322.80px;top:585.00px;font-size:14px;color:#000;transform:scale(0.8000,1.08);transform-origin:0 17px;">$</div>
<div class="t" style="left:1413.88px;top:585.00px;font-size:14px;color:#000;">188,417</div>
<div class="t" style="left:1480.80px;top:585.00px;font-size:14px;color:#000;transform:scale(0.8000,1.08);transform-origin:0 17px;">$</div>
<div class="t" style="left:1571.88px;top:585.00px;font-size:14px;color:#000;">188,417</div>
<div class="t" style="left:690.80px;top:605.00px;font-size:14px;color:#000;transform:scale(0.8000,1.08);transform-origin:0 17px;">$</div>
<div class="t" style="left:797.45px;top:605.00px;font-size:14px;color:#000;">3,238</div>
<div class="t" style="left:848.80px;top:605.00px;font-size:14px;color:#000;transform:scale(0.8000,1.08);transform-origin:0 17px;">$</div>
<div class="t" style="left:955.45px;top:605.00px;font-size:14px;color:#000;">3,238</div>
<div class="t" style="left:1006.80px;top:605.00px;font-size:14px;color:#000;transform:scale(0.8000,1.08);transform-origin:0 17px;">$</div>
<div class="t" style="left:1113.45px;top:605.00px;font-size:14px;color:#000;">3,238</div>
<div class="t" style="left:1164.80px;top:605.00px;font-size:14px;color:#000;transform:scale(0.8000,1.08);transform-origin:0 17px;">$</div>
<div class="t" style="left:1271.45px;top:605.00px;font-size:14px;color:#000;">3,238</div>
<div class="t" style="left:1322.80px;top:605.00px;font-size:14px;color:#000;transform:scale(0.8000,1.08);transform-origin:0 17px;">$</div>
<div class="t" style="left:1429.45px;top:605.00px;font-size:14px;color:#000;">3,238</div>
<div class="t" style="left:1480.80px;top:605.00px;font-size:14px;color:#000;transform:scale(0.8000,1.08);transform-origin:0 17px;">$</div>
<div class="t" style="left:1587.45px;top:605.00px;font-size:14px;color:#000;">3,238</div>
<div class="t" style="left:690.80px;top:685.00px;font-size:14px;color:#000;transform:scale(0.8000,1.08);transform-origin:0 17px;">$</div>
<div class="t" style="left:781.88px;top:685.00px;font-size:14px;color:#000;">240,989</div>
<div class="t" style="left:848.80px;top:685.00px;font-size:14px;color:#000;transform:scale(0.8000,1.08);transform-origin:0 17px;">$</div>
<div class="t" style="left:939.88px;top:685.00px;font-size:14px;color:#000;">240,989</div>
<div class="t" style="left:1006.80px;top:685.00px;font-size:14px;color:#000;transform:scale(0.8000,1.08);transform-origin:0 17px;">$</div>
<div class="t" style="left:1097.88px;top:685.00px;font-size:14px;color:#000;">240,989</div>
<div class="t" style="left:1164.80px;top:685.00px;font-size:14px;color:#000;transform:scale(0.8000,1.08);transform-origin:0 17px;">$</div>
<div class="t" style="left:1255.88px;top:685.00px;font-size:14px;color:#000;">240,989</div>
<div class="t" style="left:1322.80px;top:685.00px;font-size:14px;color:#000;transform:scale(0.8000,1.08);transform-origin:0 17px;">$</div>
<div class="t" style="left:1413.88px;top:685.00px;font-size:14px;color:#000;">240,989</div>
<div class="t" style="left:1480.80px;top:685.00px;font-size:14px;color:#000;transform:scale(0.8000,1.08);transform-origin:0 17px;">$</div>
<div class="t" style="left:1571.88px;top:685.00px;font-size:14px;color:#000;">240,989</div>
<div class="t" style="left:690.80px;top:705.00px;font-size:14px;color:#000;transform:scale(0.8000,1.08);transform-origin:0 17px;">$</div>
<div class="t" style="left:781.88px;top:705.00px;font-size:14px;color:#000;">348,816</div>
<div class="t" style="left:848.80px;top:705.00px;font-size:14px;color:#000;transform:scale(0.8000,1.08);transform-origin:0 17px;">$</div>
<div class="t" style="left:939.88px;top:705.00px;font-size:14px;color:#000;">348,816</div>
<div class="t" style="left:1006.80px;top:705.00px;font-size:14px;color:#000;transform:scale(0.8000,1.08);transform-origin:0 17px;">$</div>
<div class="t" style="left:1097.88px;top:705.00px;font-size:14px;color:#000;">348,816</div>
<div class="t" style="left:1164.80px;top:705.00px;font-size:14px;color:#000;transform:scale(0.8000,1.08);transform-origin:0 17px;">$</div>
<div class="t" style="left:1255.88px;top:705.00px;font-size:14px;color:#000;">348,816</div>
<div class="t" style="left:1322.80px;top:705.00px;font-size:14px;color:#000;transform:scale(0.8000,1.08);transform-origin:0 17px;">$</div>
<div class="t" style="left:1413.88px;top:705.00px;font-size:14px;color:#000;">348,816</div>
<div class="t" style="left:1480.80px;top:705.00px;font-size:14px;color:#000;transform:scale(0.8000,1.08);transform-origin:0 17px;">$</div>
<div class="t" style="left:1571.88px;top:705.00px;font-size:14px;color:#000;">348,816</div>
<div class="t" style="left:690.80px;top:725.00px;font-size:14px;color:#000;transform:scale(0.8000,1.08);transform-origin:0 17px;">$</div>
<div class="t" style="left:781.88px;top:725.00px;font-size:14px;color:#000;">650,333</div>
<div class="t" style="left:848.80px;top:725.00px;font-size:14px;color:#000;transform:scale(0.8000,1.08);transform-origin:0 17px;">$</div>
<div class="t" style="left:939.88px;top:725.00px;font-size:14px;color:#000;">650,333</div>
<div class="t" style="left:1006.80px;top:725.00px;font-size:14px;color:#000;transform:scale(0.8000,1.08);transform-origin:0 17px;">$</div>
<div class="t" style="left:1097.88px;top:725.00px;font-size:14px;color:#000;">650,333</div>
<div class="t" style="left:1164.80px;top:725.00px;font-size:14px;color:#000;transform:scale(0.8000,1.08);transform-origin:0 17px;">$</div>
<div class="t" style="left:1255.88px;top:725.00px;font-size:14px;color:#000;">650,333</div>
<div class="t" style="left:1322.80px;top:725.00px;font-size:14px;color:#000;transform:scale(0.8000,1.08);transform-origin:0 17px;">$</div>
<div class="t" style="left:1413.88px;top:725.00px;font-size:14px;color:#000;">650,333</div>
<div class="t" style="left:1480.80px;top:725.00px;font-size:14px;color:#000;transform:scale(0.8000,1.08);transform-origin:0 17px;">$</div>
<div class="t" style="left:1571.88px;top:725.00px;font-size:14px;color:#000;">650,333</div>
<div class="t" style="left:690.80px;top:745.00px;font-size:14px;color:#000;transform:scale(0.8000,1.08);transform-origin:0 17px;">$</div>
<div class="t" style="left:781.88px;top:745.00px;font-size:14px;color:#000;">898,560</div>
<div class="t" style="left:848.80px;top:745.00px;font-size:14px;color:#000;transform:scale(0.8000,1.08);transform-origin:0 17px;">$</div>
<div class="t" style="left:939.88px;top:745.00px;font-size:14px;color:#000;">898,560</div>
<div class="t" style="left:1006.80px;top:745.00px;font-size:14px;color:#000;transform:scale(0.8000,1.08);transform-origin:0 17px;">$</div>
<div class="t" style="left:1097.88px;top:745.00px;font-size:14px;color:#000;">898,560</div>
<div class="t" style="left:1164.80px;top:745.00px;font-size:14px;color:#000;transform:scale(0.8000,1.08);transform-origin:0 17px;">$</div>
<div class="t" style="left:1255.88px;top:745.00px;font-size:14px;color:#000;">898,560</div>
<div class="t" style="left:1322.80px;top:745.00px;font-size:14px;color:#000;transform:scale(0.8000,1.08);transform-origin:0 17px;">$</div>
<div class="t" style="left:1413.88px;top:745.00px;font-size:14px;color:#000;">898,560</div>
<div class="t" style="left:1480.80px;top:745.00px;font-size:14px;color:#000;transform:scale(0.8000,1.08);transform-origin:0 17px;">$</div>
<div class="t" style="left:1571.88px;top:745.00px;font-size:14px;color:#000;">898,560</div>
<div class="t" style="left:690.80px;top:765.00px;font-size:14px;color:#000;transform:scale(0.8000,1.08);transform-origin:0 17px;">$</div>
<div class="t" style="left:770.20px;top:765.00px;font-size:14px;color:#000;">1,517,443</div>
<div class="t" style="left:848.80px;top:765.00px;font-size:14px;color:#000;transform:scale(0.8000,1.08);transform-origin:0 17px;">$</div>
<div class="t" style="left:928.20px;top:765.00px;font-size:14px;color:#000;">1,517,443</div>
<div class="t" style="left:1006.80px;top:765.00px;font-size:14px;color:#000;transform:scale(0.8000,1.08);transform-origin:0 17px;">$</div>
<div class="t" style="left:1086.20px;top:765.00px;font-size:14px;color:#000;">1,517,443</div>
<div class="t" style="left:1164.80px;top:765.00px;font-size:14px;color:#000;transform:scale(0.8000,1.08);transform-origin:0 17px;">$</div>
<div class="t" style="left:1244.20px;top:765.00px;font-size:14px;color:#000;">1,517,443</div>
<div class="t" style="left:1322.80px;top:765.00px;font-size:14px;color:#000;transform:scale(0.8000,1.08);transform-origin:0 17px;">$</div>
<div class="t" style="left:1402.20px;top:765.00px;font-size:14px;color:#000;">1,517,443</div>
<div class="t" style="left:1480.80px;top:765.00px;font-size:14px;color:#000;transform:scale(0.8000,1.08);transform-origin:0 17px;">$</div>
<div class="t" style="left:1560.20px;top:765.00px;font-size:14px;color:#000;">1,517,443</div>
<div class="t" style="left:690.80px;top:785.00px;font-size:14px;color:#000;transform:scale(0.8000,1.08);transform-origin:0 17px;">$</div>
<div class="t" style="left:781.88px;top:785.00px;font-size:14px;color:#000;">224,640</div>
<div class="t" style="left:848.80px;top:785.00px;font-size:14px;color:#000;transform:scale(0.8000,1.08);transform-origin:0 17px;">$</div>
<div class="t" style="left:939.88px;top:785.00px;font-size:14px;color:#000;">224,640</div>
<div class="t" style="left:1006.80px;top:785.00px;font-size:14px;color:#000;transform:scale(0.8000,1.08);transform-origin:0 17px;">$</div>
<div class="t" style="left:1097.88px;top:785.00px;font-size:14px;color:#000;">224,640</div>
<div class="t" style="left:1164.80px;top:785.00px;font-size:14px;color:#000;transform:scale(0.8000,1.08);transform-origin:0 17px;">$</div>
<div class="t" style="left:1255.88px;top:785.00px;font-size:14px;color:#000;">224,640</div>
<div class="t" style="left:1322.80px;top:785.00px;font-size:14px;color:#000;transform:scale(0.8000,1.08);transform-origin:0 17px;">$</div>
<div class="t" style="left:1413.88px;top:785.00px;font-size:14px;color:#000;">224,640</div>
<div class="t" style="left:1480.80px;top:785.00px;font-size:14px;color:#000;transform:scale(0.8000,1.08);transform-origin:0 17px;">$</div>
<div class="t" style="left:1571.88px;top:785.00px;font-size:14px;color:#000;">224,640</div>
<div class="t" style="left:690.80px;top:805.00px;font-size:14px;color:#000;transform:scale(0.8000,1.08);transform-origin:0 17px;">$</div>
<div class="t" style="left:772.28px;top:805.00px;font-size:14px;color:#000;">1,111,219</div>
<div class="t" style="left:848.80px;top:805.00px;font-size:14px;color:#000;transform:scale(0.8000,1.08);transform-origin:0 17px;">$</div>
<div class="t" style="left:930.28px;top:805.00px;font-size:14px;color:#000;">1,111,219</div>
<div class="t" style="left:1006.80px;top:805.00px;font-size:14px;color:#000;transform:scale(0.8000,1.08);transform-origin:0 17px;">$</div>
<div class="t" style="left:1088.28px;top:805.00px;font-size:14px;color:#000;">1,111,219</div>
<div class="t" style="left:1164.80px;top:805.00px;font-size:14px;color:#000;transform:scale(0.8000,1.08);transform-origin:0 17px;">$</div>
<div class="t" style="left:1246.28px;top:805.00px;font-size:14px;color:#000;">1,111,219</div>
<div class="t" style="left:1322.80px;top:805.00px;font-size:14px;color:#000;transform:scale(0.8000,1.08);transform-origin:0 17px;">$</div>
<div class="t" style="left:1404.28px;top:805.00px;font-size:14px;color:#000;">1,111,219</div>
<div class="t" style="left:1480.80px;top:805.00px;font-size:14px;color:#000;transform:scale(0.8000,1.08);transform-origin:0 17px;">$</div>
<div class="t" style="left:1562.28px;top:805.00px;font-size:14px;color:#000;">1,111,219</div>
<div class="t" style="left:690.80px;top:825.00px;font-size:14px;color:#000;transform:scale(0.8000,1.08);transform-origin:0 17px;">$</div>
<div class="t" style="left:770.20px;top:825.00px;font-size:14px;color:#000;">1,698,154</div>
<div class="t" style="left:848.80px;top:825.00px;font-size:14px;color:#000;transform:scale(0.8000,1.08);transform-origin:0 17px;">$</div>
<div class="t" style="left:928.20px;top:825.00px;font-size:14px;color:#000;">1,698,154</div>
<div class="t" style="left:1006.80px;top:825.00px;font-size:14px;color:#000;transform:scale(0.8000,1.08);transform-origin:0 17px;">$</div>
<div class="t" style="left:1086.20px;top:825.00px;font-size:14px;color:#000;">1,698,154</div>
<div class="t" style="left:1164.80px;top:825.00px;font-size:14px;color:#000;transform:scale(0.8000,1.08);transform-origin:0 17px;">$</div>
<div class="t" style="left:1244.20px;top:825.00px;font-size:14px;color:#000;">1,698,154</div>
<div class="t" style="left:1322.80px;top:825.00px;font-size:14px;color:#000;transform:scale(0.8000,1.08);transform-origin:0 17px;">$</div>
<div class="t" style="left:1402.20px;top:825.00px;font-size:14px;color:#000;">1,698,154</div>
<div class="t" style="left:1480.80px;top:825.00px;font-size:14px;color:#000;transform:scale(0.8000,1.08);transform-origin:0 17px;">$</div>
<div class="t" style="left:1560.20px;top:825.00px;font-size:14px;color:#000;">1,698,154</div>
<div class="t" style="left:690.80px;top:865.00px;font-size:14px;color:#000;transform:scale(0.8000,1.08);transform-origin:0 17px;">$</div>
<div class="t" style="left:781.88px;top:865.00px;font-size:14px;color:#000;">125,000</div>
<div class="t" style="left:848.80px;top:865.00px;font-size:14px;color:#000;transform:scale(0.8000,1.08);transform-origin:0 17px;">$</div>
<div class="t" style="left:939.88px;top:865.00px;font-size:14px;color:#000;">125,000</div>
<div class="t" style="left:1006.80px;top:865.00px;font-size:14px;color:#000;transform:scale(0.8000,1.08);transform-origin:0 17px;">$</div>
<div class="t" style="left:1097.88px;top:865.00px;font-size:14px;color:#000;">125,000</div>
<div class="t" style="left:1164.80px;top:865.00px;font-size:14px;color:#000;transform:scale(0.8000,1.08);transform-origin:0 17px;">$</div>
<div class="t" style="left:1255.88px;top:865.00px;font-size:14px;color:#000;">125,000</div>
<div class="t" style="left:1322.80px;top:865.00px;font-size:14px;color:#000;transform:scale(0.8000,1.08);transform-origin:0 17px;">$</div>
<div class="t" style="left:1413.88px;top:865.00px;font-size:14px;color:#000;">125,000</div>
<div class="t" style="left:1480.80px;top:865.00px;font-size:14px;color:#000;transform:scale(0.8000,1.08);transform-origin:0 17px;">$</div>
<div class="t" style="left:1571.88px;top:865.00px;font-size:14px;color:#000;">125,000</div>
<div class="t" style="left:690.80px;top:885.00px;font-size:14px;color:#000;transform:scale(0.8000,1.08);transform-origin:0 17px;">$</div>
<div class="t" style="left:827.90px;top:886.00px;font-size:14px;color:#000;">-</div>
<div class="t" style="left:848.80px;top:885.00px;font-size:14px;color:#000;transform:scale(0.8000,1.08);transform-origin:0 17px;">$</div>
<div class="t" style="left:985.90px;top:886.00px;font-size:14px;color:#000;">-</div>
<div class="t" style="left:1006.80px;top:885.00px;font-size:14px;color:#000;transform:scale(0.8000,1.08);transform-origin:0 17px;">$</div>
<div class="t" style="left:1143.90px;top:886.00px;font-size:14px;color:#000;">-</div>
<div class="t" style="left:1164.80px;top:885.00px;font-size:14px;color:#000;transform:scale(0.8000,1.08);transform-origin:0 17px;">$</div>
<div class="t" style="left:1301.90px;top:886.00px;font-size:14px;color:#000;">-</div>
<div class="t" style="left:1322.80px;top:885.00px;font-size:14px;color:#000;transform:scale(0.8000,1.08);transform-origin:0 17px;">$</div>
<div class="t" style="left:1459.90px;top:886.00px;font-size:14px;color:#000;">-</div>
<div class="t" style="left:1480.80px;top:885.00px;font-size:14px;color:#000;transform:scale(0.8000,1.08);transform-origin:0 17px;">$</div>
<div class="t" style="left:1617.90px;top:886.00px;font-size:14px;color:#000;">-</div>
<div class="t" style="left:690.80px;top:905.00px;font-size:14px;color:#000;transform:scale(0.8000,1.08);transform-origin:0 17px;">$</div>
<div class="t" style="left:781.88px;top:905.00px;font-size:14px;color:#000;">146,000</div>
<div class="t" style="left:848.80px;top:905.00px;font-size:14px;color:#000;transform:scale(0.8000,1.08);transform-origin:0 17px;">$</div>
<div class="t" style="left:939.88px;top:905.00px;font-size:14px;color:#000;">146,000</div>
<div class="t" style="left:1006.80px;top:905.00px;font-size:14px;color:#000;transform:scale(0.8000,1.08);transform-origin:0 17px;">$</div>
<div class="t" style="left:1097.88px;top:905.00px;font-size:14px;color:#000;">146,000</div>
<div class="t" style="left:1164.80px;top:905.00px;font-size:14px;color:#000;transform:scale(0.8000,1.08);transform-origin:0 17px;">$</div>
<div class="t" style="left:1255.88px;top:905.00px;font-size:14px;color:#000;">146,000</div>
<div class="t" style="left:1322.80px;top:905.00px;font-size:14px;color:#000;transform:scale(0.8000,1.08);transform-origin:0 17px;">$</div>
<div class="t" style="left:1413.88px;top:905.00px;font-size:14px;color:#000;">146,000</div>
<div class="t" style="left:1480.80px;top:905.00px;font-size:14px;color:#000;transform:scale(0.8000,1.08);transform-origin:0 17px;">$</div>
<div class="t" style="left:1571.88px;top:905.00px;font-size:14px;color:#000;">146,000</div>
<div class="t" style="left:690.80px;top:925.00px;font-size:14px;color:#000;transform:scale(0.8000,1.08);transform-origin:0 17px;">$</div>
<div class="t" style="left:789.67px;top:925.00px;font-size:14px;color:#000;">73,000</div>
<div class="t" style="left:848.80px;top:925.00px;font-size:14px;color:#000;transform:scale(0.8000,1.08);transform-origin:0 17px;">$</div>
<div class="t" style="left:947.67px;top:925.00px;font-size:14px;color:#000;">73,000</div>
<div class="t" style="left:1006.80px;top:925.00px;font-size:14px;color:#000;transform:scale(0.8000,1.08);transform-origin:0 17px;">$</div>
<div class="t" style="left:1105.67px;top:925.00px;font-size:14px;color:#000;">73,000</div>
<div class="t" style="left:1164.80px;top:925.00px;font-size:14px;color:#000;transform:scale(0.8000,1.08);transform-origin:0 17px;">$</div>
<div class="t" style="left:1263.67px;top:925.00px;font-size:14px;color:#000;">73,000</div>
<div class="t" style="left:1322.80px;top:925.00px;font-size:14px;color:#000;transform:scale(0.8000,1.08);transform-origin:0 17px;">$</div>
<div class="t" style="left:1421.67px;top:925.00px;font-size:14px;color:#000;">73,000</div>
<div class="t" style="left:1480.80px;top:925.00px;font-size:14px;color:#000;transform:scale(0.8000,1.08);transform-origin:0 17px;">$</div>
<div class="t" style="left:1579.67px;top:925.00px;font-size:14px;color:#000;">73,000</div>
<div class="t" style="left:690.80px;top:945.00px;font-size:14px;color:#000;transform:scale(0.8000,1.08);transform-origin:0 17px;">$</div>
<div class="t" style="left:789.67px;top:945.00px;font-size:14px;color:#000;">90,000</div>
<div class="t" style="left:848.80px;top:945.00px;font-size:14px;color:#000;transform:scale(0.8000,1.08);transform-origin:0 17px;">$</div>
<div class="t" style="left:947.67px;top:945.00px;font-size:14px;color:#000;">90,000</div>
<div class="t" style="left:1006.80px;top:945.00px;font-size:14px;color:#000;transform:scale(0.8000,1.08);transform-origin:0 17px;">$</div>
<div class="t" style="left:1105.67px;top:945.00px;font-size:14px;color:#000;">90,000</div>
<div class="t" style="left:1164.80px;top:945.00px;font-size:14px;color:#000;transform:scale(0.8000,1.08);transform-origin:0 17px;">$</div>
<div class="t" style="left:1263.67px;top:945.00px;font-size:14px;color:#000;">90,000</div>
<div class="t" style="left:1322.80px;top:945.00px;font-size:14px;color:#000;transform:scale(0.8000,1.08);transform-origin:0 17px;">$</div>
<div class="t" style="left:1421.67px;top:945.00px;font-size:14px;color:#000;">90,000</div>
<div class="t" style="left:1480.80px;top:945.00px;font-size:14px;color:#000;transform:scale(0.8000,1.08);transform-origin:0 17px;">$</div>
<div class="t" style="left:1579.67px;top:945.00px;font-size:14px;color:#000;">90,000</div>
<div class="t" style="left:690.80px;top:965.00px;font-size:14px;color:#000;transform:scale(0.8000,1.08);transform-origin:0 17px;">$</div>
<div class="t" style="left:781.88px;top:965.00px;font-size:14px;color:#000;">240,000</div>
<div class="t" style="left:848.80px;top:965.00px;font-size:14px;color:#000;transform:scale(0.8000,1.08);transform-origin:0 17px;">$</div>
<div class="t" style="left:939.88px;top:965.00px;font-size:14px;color:#000;">240,000</div>
<div class="t" style="left:1006.80px;top:965.00px;font-size:14px;color:#000;transform:scale(0.8000,1.08);transform-origin:0 17px;">$</div>
<div class="t" style="left:1097.88px;top:965.00px;font-size:14px;color:#000;">240,000</div>
<div class="t" style="left:1164.80px;top:965.00px;font-size:14px;color:#000;transform:scale(0.8000,1.08);transform-origin:0 17px;">$</div>
<div class="t" style="left:1255.88px;top:965.00px;font-size:14px;color:#000;">240,000</div>
<div class="t" style="left:1322.80px;top:965.00px;font-size:14px;color:#000;transform:scale(0.8000,1.08);transform-origin:0 17px;">$</div>
<div class="t" style="left:1413.88px;top:965.00px;font-size:14px;color:#000;">240,000</div>
<div class="t" style="left:1480.80px;top:965.00px;font-size:14px;color:#000;transform:scale(0.8000,1.08);transform-origin:0 17px;">$</div>
<div class="t" style="left:1571.88px;top:965.00px;font-size:14px;color:#000;">240,000</div>
<div class="t" style="left:690.80px;top:985.00px;font-size:14px;color:#000;transform:scale(0.8000,1.08);transform-origin:0 17px;">$</div>
<div class="t" style="left:781.88px;top:985.00px;font-size:14px;color:#000;">280,000</div>
<div class="t" style="left:848.80px;top:985.00px;font-size:14px;color:#000;transform:scale(0.8000,1.08);transform-origin:0 17px;">$</div>
<div class="t" style="left:939.88px;top:985.00px;font-size:14px;color:#000;">280,000</div>
<div class="t" style="left:1006.80px;top:985.00px;font-size:14px;color:#000;transform:scale(0.8000,1.08);transform-origin:0 17px;">$</div>
<div class="t" style="left:1097.88px;top:985.00px;font-size:14px;color:#000;">280,000</div>
<div class="t" style="left:1164.80px;top:985.00px;font-size:14px;color:#000;transform:scale(0.8000,1.08);transform-origin:0 17px;">$</div>
<div class="t" style="left:1255.88px;top:985.00px;font-size:14px;color:#000;">280,000</div>
<div class="t" style="left:1322.80px;top:985.00px;font-size:14px;color:#000;transform:scale(0.8000,1.08);transform-origin:0 17px;">$</div>
<div class="t" style="left:1413.88px;top:985.00px;font-size:14px;color:#000;">280,000</div>
<div class="t" style="left:1480.80px;top:985.00px;font-size:14px;color:#000;transform:scale(0.8000,1.08);transform-origin:0 17px;">$</div>
<div class="t" style="left:1571.88px;top:985.00px;font-size:14px;color:#000;">280,000</div>
<div class="t" style="left:690.80px;top:1005.00px;font-size:14px;color:#000;transform:scale(0.8000,1.08);transform-origin:0 17px;">$</div>
<div class="t" style="left:827.90px;top:1006.00px;font-size:14px;color:#000;">-</div>
<div class="t" style="left:848.80px;top:1005.00px;font-size:14px;color:#000;transform:scale(0.8000,1.08);transform-origin:0 17px;">$</div>
<div class="t" style="left:985.90px;top:1006.00px;font-size:14px;color:#000;">-</div>
<div class="t" style="left:1006.80px;top:1005.00px;font-size:14px;color:#000;transform:scale(0.8000,1.08);transform-origin:0 17px;">$</div>
<div class="t" style="left:1143.90px;top:1006.00px;font-size:14px;color:#000;">-</div>
<div class="t" style="left:1164.80px;top:1005.00px;font-size:14px;color:#000;transform:scale(0.8000,1.08);transform-origin:0 17px;">$</div>
<div class="t" style="left:1301.90px;top:1006.00px;font-size:14px;color:#000;">-</div>
<div class="t" style="left:1322.80px;top:1005.00px;font-size:14px;color:#000;transform:scale(0.8000,1.08);transform-origin:0 17px;">$</div>
<div class="t" style="left:1459.90px;top:1006.00px;font-size:14px;color:#000;">-</div>
<div class="t" style="left:1480.80px;top:1005.00px;font-size:14px;color:#000;transform:scale(0.8000,1.08);transform-origin:0 17px;">$</div>
<div class="t" style="left:1617.90px;top:1006.00px;font-size:14px;color:#000;">-</div>
<div class="t" style="left:690.80px;top:1025.00px;font-size:14px;color:#000;transform:scale(0.8000,1.08);transform-origin:0 17px;">$</div>
<div class="t" style="left:789.67px;top:1025.00px;font-size:14px;color:#000;">35,000</div>
<div class="t" style="left:848.80px;top:1025.00px;font-size:14px;color:#000;transform:scale(0.8000,1.08);transform-origin:0 17px;">$</div>
<div class="t" style="left:947.67px;top:1025.00px;font-size:14px;color:#000;">35,000</div>
<div class="t" style="left:1006.80px;top:1025.00px;font-size:14px;color:#000;transform:scale(0.8000,1.08);transform-origin:0 17px;">$</div>
<div class="t" style="left:1105.67px;top:1025.00px;font-size:14px;color:#000;">35,000</div>
<div class="t" style="left:1164.80px;top:1025.00px;font-size:14px;color:#000;transform:scale(0.8000,1.08);transform-origin:0 17px;">$</div>
<div class="t" style="left:1263.67px;top:1025.00px;font-size:14px;color:#000;">35,000</div>
<div class="t" style="left:1322.80px;top:1025.00px;font-size:14px;color:#000;transform:scale(0.8000,1.08);transform-origin:0 17px;">$</div>
<div class="t" style="left:1421.67px;top:1025.00px;font-size:14px;color:#000;">35,000</div>
<div class="t" style="left:1480.80px;top:1025.00px;font-size:14px;color:#000;transform:scale(0.8000,1.08);transform-origin:0 17px;">$</div>
<div class="t" style="left:1579.67px;top:1025.00px;font-size:14px;color:#000;">35,000</div>
<div class="t" style="left:690.80px;top:1045.00px;font-size:14px;color:#000;transform:scale(0.8000,1.08);transform-origin:0 17px;">$</div>
<div class="t" style="left:827.90px;top:1046.00px;font-size:14px;color:#000;">-</div>
<div class="t" style="left:848.80px;top:1045.00px;font-size:14px;color:#000;transform:scale(0.8000,1.08);transform-origin:0 17px;">$</div>
<div class="t" style="left:985.90px;top:1046.00px;font-size:14px;color:#000;">-</div>
<div class="t" style="left:1006.80px;top:1045.00px;font-size:14px;color:#000;transform:scale(0.8000,1.08);transform-origin:0 17px;">$</div>
<div class="t" style="left:1143.90px;top:1046.00px;font-size:14px;color:#000;">-</div>
<div class="t" style="left:1164.80px;top:1045.00px;font-size:14px;color:#000;transform:scale(0.8000,1.08);transform-origin:0 17px;">$</div>
<div class="t" style="left:1301.90px;top:1046.00px;font-size:14px;color:#000;">-</div>
<div class="t" style="left:1322.80px;top:1045.00px;font-size:14px;color:#000;transform:scale(0.8000,1.08);transform-origin:0 17px;">$</div>
<div class="t" style="left:1459.90px;top:1046.00px;font-size:14px;color:#000;">-</div>
<div class="t" style="left:1480.80px;top:1045.00px;font-size:14px;color:#000;transform:scale(0.8000,1.08);transform-origin:0 17px;">$</div>
<div class="t" style="left:1617.90px;top:1046.00px;font-size:14px;color:#000;">-</div>
<div class="r" style="left:0px;top:0px;width:1609px;height:7px;background:#e6e6e6;"></div>
<div class="r" style="left:503px;top:0px;width:180px;height:7px;background:#d2d2d2;"></div>
<div class="r" style="left:6px;top:0px;width:1px;height:7px;background:#ababab;"></div>
<div class="r" style="left:33px;top:0px;width:1px;height:7px;background:#ababab;"></div>
<div class="r" style="left:102px;top:0px;width:1px;height:7px;background:#ababab;"></div>
<div class="r" style="left:120px;top:0px;width:1px;height:7px;background:#ababab;"></div>
<div class="r" style="left:503px;top:0px;width:1px;height:7px;background:#ababab;"></div>
<div class="r" style="left:682px;top:0px;width:1px;height:7px;background:#ababab;"></div>
<div class="r" style="left:840px;top:0px;width:1px;height:7px;background:#ababab;"></div>
<div class="r" style="left:998px;top:0px;width:1px;height:7px;background:#ababab;"></div>
<div class="r" style="left:1156px;top:0px;width:1px;height:7px;background:#ababab;"></div>
<div class="r" style="left:1314px;top:0px;width:1px;height:7px;background:#ababab;"></div>
<div class="r" style="left:1472px;top:0px;width:1px;height:7px;background:#ababab;"></div>
<div class="r" style="left:0px;top:7px;width:1609px;height:1px;background:#9e9e9e;"></div>
<div class="r" style="left:504px;top:6px;width:179px;height:2px;background:#217346;"></div>
<div class="r" style="left:0px;top:0px;width:3px;height:4px;background:#bdbdbd;"></div>
<div class="hl" style="left:1px;color:#000;">A</div>
<div class="hl" style="left:47px;color:#000;">B</div>
<div class="hl" style="left:91px;color:#000;">C</div>
<div class="hl" style="left:291px;color:#000;">D</div>
<div class="hl" style="left:573px;color:#217346;">E</div>
<div class="hl" style="left:742px;color:#000;">F</div>
<div class="hl" style="left:900px;color:#000;">G</div>
<div class="hl" style="left:1058px;color:#000;">H</div>
<div class="hl" style="left:1216px;color:#000;">I</div>
<div class="hl" style="left:1374px;color:#000;">J</div>
<div class="hl" style="left:1532px;color:#000;">K</div>
<div class="r" style="left:0px;top:8px;width:6px;height:1058px;background:#e6e6e6;"></div>
<div class="r" style="left:6px;top:0px;width:1px;height:1066px;background:#9e9e9e;"></div>
<div class="r" style="left:0px;top:27px;width:6px;height:1px;background:#ababab;"></div>
<div class="r" style="left:0px;top:47px;width:6px;height:1px;background:#ababab;"></div>
<div class="r" style="left:0px;top:67px;width:6px;height:1px;background:#ababab;"></div>
<div class="r" style="left:0px;top:87px;width:6px;height:1px;background:#ababab;"></div>
<div class="r" style="left:0px;top:107px;width:6px;height:1px;background:#ababab;"></div>
<div class="r" style="left:0px;top:127px;width:6px;height:1px;background:#ababab;"></div>
<div class="r" style="left:0px;top:147px;width:6px;height:1px;background:#ababab;"></div>
<div class="r" style="left:0px;top:167px;width:6px;height:1px;background:#ababab;"></div>
<div class="r" style="left:0px;top:187px;width:6px;height:1px;background:#ababab;"></div>
<div class="r" style="left:0px;top:208px;width:6px;height:1px;background:#ababab;"></div>
<div class="r" style="left:0px;top:229px;width:6px;height:1px;background:#ababab;"></div>
<div class="r" style="left:0px;top:249px;width:6px;height:1px;background:#ababab;"></div>
<div class="r" style="left:0px;top:269px;width:6px;height:1px;background:#ababab;"></div>
<div class="r" style="left:0px;top:289px;width:6px;height:1px;background:#ababab;"></div>
<div class="r" style="left:0px;top:309px;width:6px;height:1px;background:#ababab;"></div>
<div class="r" style="left:0px;top:329px;width:6px;height:1px;background:#ababab;"></div>
<div class="r" style="left:0px;top:349px;width:6px;height:1px;background:#ababab;"></div>
<div class="r" style="left:0px;top:369px;width:6px;height:1px;background:#ababab;"></div>
<div class="r" style="left:0px;top:389px;width:6px;height:1px;background:#ababab;"></div>
<div class="r" style="left:0px;top:409px;width:6px;height:1px;background:#ababab;"></div>
<div class="r" style="left:0px;top:429px;width:6px;height:1px;background:#ababab;"></div>
<div class="r" style="left:0px;top:449px;width:6px;height:1px;background:#ababab;"></div>
<div class="r" style="left:0px;top:469px;width:6px;height:1px;background:#ababab;"></div>
<div class="r" style="left:0px;top:489px;width:6px;height:1px;background:#ababab;"></div>
<div class="r" style="left:0px;top:509px;width:6px;height:1px;background:#ababab;"></div>
<div class="r" style="left:0px;top:529px;width:6px;height:1px;background:#ababab;"></div>
<div class="r" style="left:0px;top:549px;width:6px;height:1px;background:#ababab;"></div>
<div class="r" style="left:0px;top:569px;width:6px;height:1px;background:#ababab;"></div>
<div class="r" style="left:0px;top:589px;width:6px;height:1px;background:#ababab;"></div>
<div class="r" style="left:0px;top:609px;width:6px;height:1px;background:#ababab;"></div>
<div class="r" style="left:0px;top:629px;width:6px;height:1px;background:#ababab;"></div>
<div class="r" style="left:0px;top:649px;width:6px;height:1px;background:#ababab;"></div>
<div class="r" style="left:0px;top:669px;width:6px;height:1px;background:#ababab;"></div>
<div class="r" style="left:0px;top:689px;width:6px;height:1px;background:#ababab;"></div>
<div class="r" style="left:0px;top:709px;width:6px;height:1px;background:#ababab;"></div>
<div class="r" style="left:0px;top:729px;width:6px;height:1px;background:#ababab;"></div>
<div class="r" style="left:0px;top:749px;width:6px;height:1px;background:#ababab;"></div>
<div class="r" style="left:0px;top:769px;width:6px;height:1px;background:#ababab;"></div>
<div class="r" style="left:0px;top:789px;width:6px;height:1px;background:#ababab;"></div>
<div class="r" style="left:0px;top:809px;width:6px;height:1px;background:#ababab;"></div>
<div class="r" style="left:0px;top:829px;width:6px;height:1px;background:#ababab;"></div>
<div class="r" style="left:0px;top:849px;width:6px;height:1px;background:#ababab;"></div>
<div class="r" style="left:0px;top:869px;width:6px;height:1px;background:#ababab;"></div>
<div class="r" style="left:0px;top:889px;width:6px;height:1px;background:#ababab;"></div>
<div class="r" style="left:0px;top:909px;width:6px;height:1px;background:#ababab;"></div>
<div class="r" style="left:0px;top:929px;width:6px;height:1px;background:#ababab;"></div>
<div class="r" style="left:0px;top:949px;width:6px;height:1px;background:#ababab;"></div>
<div class="r" style="left:0px;top:969px;width:6px;height:1px;background:#ababab;"></div>
<div class="r" style="left:0px;top:989px;width:6px;height:1px;background:#ababab;"></div>
<div class="r" style="left:0px;top:1009px;width:6px;height:1px;background:#ababab;"></div>
<div class="r" style="left:0px;top:1029px;width:6px;height:1px;background:#ababab;"></div>
<div class="r" style="left:0px;top:1049px;width:6px;height:1px;background:#ababab;"></div>
<div class="r" style="left:503px;top:8px;width:1px;height:1058px;background:#9e9e9e;"></div>
<div class="r" style="left:7px;top:107px;width:1602px;height:1px;background:#9e9e9e;"></div>
<div class="r" style="left:0px;top:1066px;width:1609px;height:30px;background:#e6e6e6;"></div>
<div class="r" style="left:0px;top:1066px;width:1609px;height:1px;background:#a0a0a0;"></div>
<div class="r" style="left:0px;top:1094px;width:1609px;height:2px;background:#c8c8c8;"></div>
<svg class="r" style="left:0;top:1066px" width="60" height="30"><polygon points="6,14.5 11,10 11,19" fill="#c6c6c6"/><polygon points="35,10 40,14.5 35,19" fill="#c6c6c6"/></svg>
<div class="r" style="left:84px;top:1069px;width:80px;height:23px;background:#00b0f0;"></div>
<div class="r" style="left:278px;top:1069px;width:102px;height:23px;background:#00b0f0;"></div>
<div class="r" style="left:385px;top:1069px;width:66px;height:23px;background:#00b0f0;"></div>
<div class="r" style="left:456px;top:1069px;width:61px;height:23px;background:#ffff99;"></div>
<div class="r" style="left:522px;top:1069px;width:72px;height:23px;background:#ffff99;"></div>
<div class="r" style="left:599px;top:1069px;width:107px;height:23px;background:#ffff99;"></div>
<div class="r" style="left:711px;top:1069px;width:94px;height:23px;background:#ffff99;"></div>
<div class="r" style="left:810px;top:1069px;width:96px;height:23px;background:#002060;"></div>
<div class="r" style="left:911px;top:1069px;width:83px;height:23px;background:#ffff00;"></div>
<div class="r" style="left:81px;top:1070px;width:1px;height:21px;background:#a0a0a0;"></div>
<div class="r" style="left:382px;top:1070px;width:1px;height:21px;background:#a0a0a0;"></div>
<div class="r" style="left:453px;top:1070px;width:1px;height:21px;background:#a0a0a0;"></div>
<div class="r" style="left:519px;top:1070px;width:1px;height:21px;background:#a0a0a0;"></div>
<div class="r" style="left:596px;top:1070px;width:1px;height:21px;background:#a0a0a0;"></div>
<div class="r" style="left:708px;top:1070px;width:1px;height:21px;background:#a0a0a0;"></div>
<div class="r" style="left:807px;top:1070px;width:1px;height:21px;background:#a0a0a0;"></div>
<div class="r" style="left:908px;top:1070px;width:1px;height:21px;background:#a0a0a0;"></div>
<div class="r" style="left:996px;top:1070px;width:1px;height:21px;background:#a0a0a0;"></div>
<div class="r" style="left:166px;top:1066px;width:110px;height:26px;background:#ffffff;"></div>
<div class="r" style="left:169px;top:1069px;width:104px;height:20px;background:linear-gradient(#ffffff 8%,#a0daf5);"></div>
<div class="r" style="left:166px;top:1066px;width:1px;height:25px;background:#a0a0a0;"></div>
<div class="r" style="left:275px;top:1066px;width:1px;height:25px;background:#a0a0a0;"></div>
<div class="r" style="left:166px;top:1090px;width:110px;height:2px;background:#217346;"></div>
<svg class="r" style="left:1028px;top:1069px" width="24" height="24"><circle cx="12" cy="12" r="9.3" fill="none" stroke="#7a7a7a" stroke-width="1.3"/><rect x="7" y="11" width="10" height="2" fill="#7a7a7a"/><rect x="11" y="7" width="2" height="10" fill="#7a7a7a"/></svg>
<div class="t" style="left:93.98px;top:1063.00px;font-size:16px;color:#000;transform:scaleX(1.0196);">Returns</div>
<div class="t" style="left:287.50px;top:1063.00px;font-size:16px;color:#000;transform:scaleX(1.1023);">Mine&amp;Ore</div>
<div class="t" style="left:396.00px;top:1063.00px;font-size:16px;color:#000;">Visual</div>
<div class="t" style="left:465.50px;top:1063.00px;font-size:16px;color:#000;transform:scaleX(0.9658);">Costs</div>
<div class="t" style="left:532.50px;top:1063.00px;font-size:16px;color:#000;transform:scaleX(1.0264);">Wages</div>
<div class="t" style="left:609.93px;top:1063.00px;font-size:16px;color:#000;transform:scaleX(1.0704);">Equipment</div>
<div class="t" style="left:722.54px;top:1063.00px;font-size:16px;color:#000;transform:scaleX(1.0574);">Buildings</div>
<div class="t" style="left:820.74px;top:1063.00px;font-size:16px;color:#fff;transform:scaleX(1.0581);">Financing</div>
<div class="t" style="left:920.98px;top:1063.00px;font-size:16px;color:#000;transform:scaleX(1.0205);">ReadMe</div>
<div class="t" style="left:177.86px;top:1063.00px;font-size:16px;color:#217346;font-weight:bold;transform:scaleX(1.0425);">Pro-Forma</div>
</body></html>
